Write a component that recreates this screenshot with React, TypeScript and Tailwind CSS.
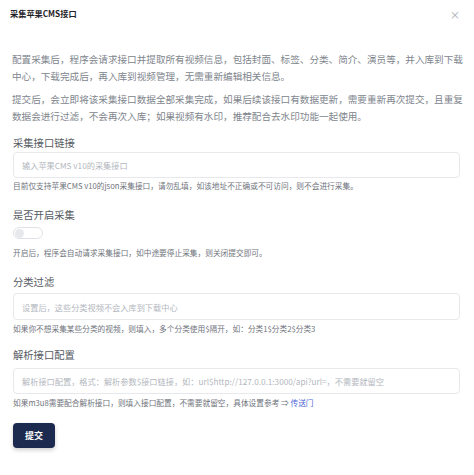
import { useState } from "react"

const font = { fontFamily: '"Noto Sans CJK SC", "Noto Sans", sans-serif' }

function Field({
  label,
  placeholder,
  help,
  labelTop,
  inputTop,
  inputH,
  helpTop,
}: {
  label: string
  placeholder: string
  help: React.ReactNode
  labelTop: string
  inputTop: string
  inputH: string
  helpTop: string
}) {
  return (
    <div>
      <div className={`${labelTop} text-[10.3px] leading-[14px] text-[#555a62]`}>{label}</div>
      <input
        className={`${inputTop} ${inputH} block w-[447px] rounded-[4px] border border-[#e6e8eb] bg-white px-[8px] text-[8.2px] text-[#374151] outline-none placeholder:text-[#b3b7be]`}
        placeholder={placeholder}
      />
      <div className={`${helpTop} text-[7.7px] leading-[10px] text-[#6f747c]`}>{help}</div>
    </div>
  )
}

export default function App() {
  const [enabled, setEnabled] = useState(false)

  return (
    <div className="h-[475px] w-[474px] overflow-hidden bg-white px-[12px]" style={font}>
      {/* Header */}
      <div className="flex h-[18px] items-start justify-between pt-[8px]">
        <div className="ml-[-2px] text-[8.2px] font-bold leading-[10px] text-[#1f2329]">采集苹果CMS接口</div>
        <span className="mt-[2px] mr-[2px] text-[10px] leading-[10px] text-[#a3a8b0]">×</span>
      </div>

      {/* Intro */}
      <p className="mt-[33px] w-[454px] text-[9.6px] leading-[17px] text-[#80858d]">
        配置采集后，程序会请求接口并提取所有视频信息，包括封面、标签、分类、简介、演员等，并入库到下载中心，下载完成后，再入库到视频管理，无需重新编辑相关信息。
      </p>
      <p className="mt-[6px] w-[454px] text-[9.6px] leading-[17px] text-[#80858d]">
        提交后，会立即将该采集接口数据全部采集完成，如果后续该接口有数据更新，需要重新再次提交，且重复数据会进行过滤，不会再次入库；如果视频有水印，推荐配合去水印功能一起使用。
      </p>

      <div className="pl-[1px]">
        <Field
          label="采集接口链接"
          placeholder="输入苹果CMS v10的采集接口"
          help="目前仅支持苹果CMS v10的json采集接口，请勿乱填，如该地址不正确或不可访问，则不会进行采集。"
          labelTop="mt-[11px]"
          inputTop="mt-[2px]"
          inputH="h-[26px]"
          helpTop="mt-[3px]"
        />

        {/* Toggle */}
        <div className="mt-[17px] text-[10.3px] leading-[14px] text-[#555a62]">是否开启采集</div>
        <button
          type="button"
          onClick={() => setEnabled(!enabled)}
          className={`mt-[5px] flex h-[12px] w-[30px] items-center rounded-full border px-[1px] ${
            enabled ? "justify-end border-[#1b2a4e] bg-[#1b2a4e]" : "justify-start border-[#dfe2e6] bg-white"
          }`}
        >
          <span className="h-[9px] w-[9px] rounded-full bg-[#e6e8eb]" />
        </button>
        <div className="mt-[9px] text-[7.7px] leading-[10px] text-[#6f747c]">
          开启后，程序会自动请求采集接口，如中途要停止采集，则关闭提交即可。
        </div>

        <Field
          label="分类过滤"
          placeholder="设置后，这些分类视频不会入库到下载中心"
          help="如果你不想采集某些分类的视频，则填入，多个分类使用$隔开，如：分类1$分类2$分类3"
          labelTop="mt-[17px]"
          inputTop="mt-[4px]"
          inputH="h-[27px]"
          helpTop="mt-[4px]"
        />

        <Field
          label="解析接口配置"
          placeholder="解析接口配置，格式：解析参数$接口链接，如：url$http://127.0.0.1:3000/api?url=，不需要就留空"
          help={
            <>
              如果m3u8需要配合解析接口，则填入接口配置，不需要就留空，具体设置参考 ⇒{" "}
              <a className="text-[#4a63d2]">传送门</a>
            </>
          }
          labelTop="mt-[14px]"
          inputTop="mt-[6px]"
          inputH="h-[26px]"
          helpTop="mt-[4px]"
        />

        <button
          type="button"
          className="mt-[15px] h-[25px] w-[42px] rounded-[4px] bg-[#1b2a4e] text-[9px] font-bold text-white shadow-[0_2px_4px_rgba(0,0,0,0.2)]"
        >
          提交
        </button>
      </div>
    </div>
  )
}
